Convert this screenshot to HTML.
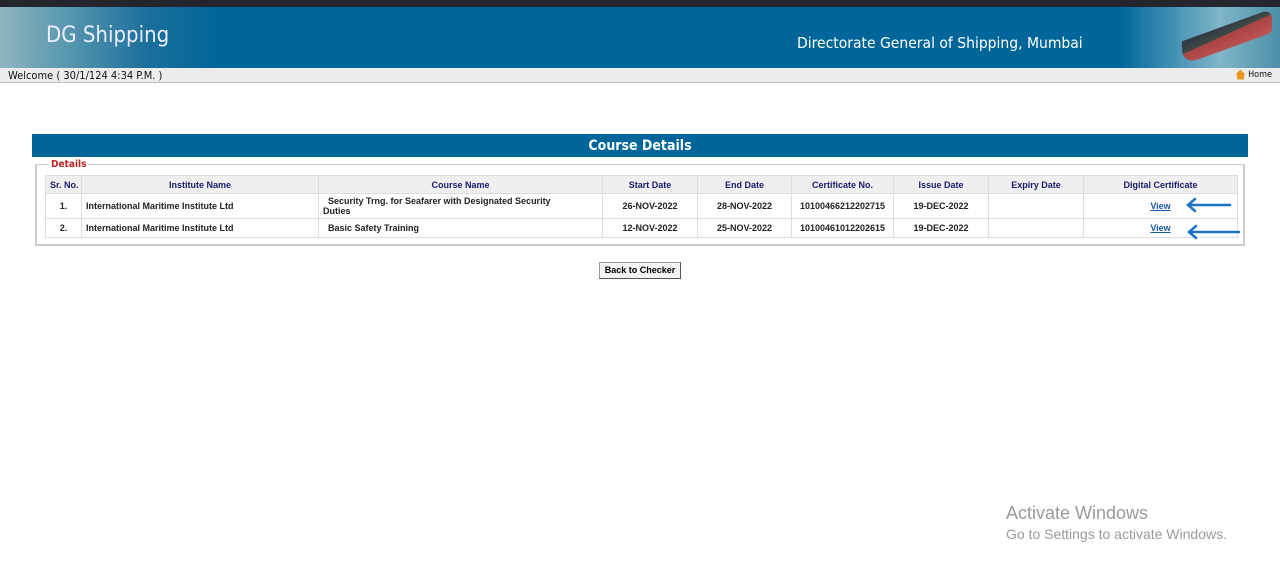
<!DOCTYPE html>
<html><head><meta charset="utf-8"><style>
*{margin:0;padding:0;box-sizing:border-box}
body{width:1280px;height:569px;background:#fff;font-family:"DejaVu Sans Condensed","DejaVu Sans",sans-serif;position:relative;overflow:hidden}
.top{position:absolute;left:0;top:0;width:1280px;height:7px;background:#25252d}
.ban{position:absolute;left:0;top:7px;width:1280px;height:61px;background:linear-gradient(90deg,#8fb5c0 0,#5d9ab0 60px,#1a6e9c 150px,#006699 220px,#006699 1120px,#3f8eb2 1170px,#7fb6c8 1220px,#4d8fa8 1280px)}
.ban .t1{position:absolute;left:46px;top:16px;color:#eef;font-size:22px;font-family:"DejaVu Sans Condensed","DejaVu Sans",sans-serif}
.ban .t2{position:absolute;left:797px;top:27px;color:#fff;font-size:15.5px;font-family:"DejaVu Sans Condensed","DejaVu Sans",sans-serif}
.ship{position:absolute;left:1182px;top:18px;width:90px;height:24px;background:linear-gradient(175deg,#334 0,#3a4a44 40%,#a44 42%,#b55 100%);transform:skewY(-20deg);border-radius:0 10px 4px 16px}
.wel{position:absolute;left:0;top:68px;width:1280px;height:15px;background:#ececec;border-bottom:1px solid #bbb;font-size:11px;padding-left:8px;line-height:15px;color:#111}
.home{position:absolute;right:8px;top:0;font-size:9px}
.home b{display:inline-block;width:10px;height:10px;background:#e8931a;clip-path:polygon(50% 0,100% 50%,85% 50%,85% 100%,15% 100%,15% 50%,0 50%);vertical-align:middle}
.cd{position:absolute;left:32px;top:134px;width:1216px;height:23px;background:#006699;color:#fff;font-weight:bold;font-size:14px;text-align:center;line-height:24px}
fieldset{position:absolute;left:35px;top:159px;width:1210px;height:87px;border:2px solid #ccc;border-top-width:1px;padding:0 8px}
legend{color:#b22;font-size:10px;font-weight:bold;padding:0 2px;margin-left:4px}
table{position:absolute;left:8px;top:5px;width:1192px;table-layout:fixed;border-collapse:collapse;font-size:9px;font-weight:bold;color:#222;font-family:"Liberation Sans",sans-serif}
td,th{border:1px solid #ddd;padding:0 4px;white-space:nowrap;overflow:hidden}
th{height:18px;background:#efefef;color:#1a1a6e}
td{height:25px}
td.w{line-height:10px}
tr.r2 td{height:19px}
.c{text-align:center}
a{color:#1a5aa8}
.btn{position:absolute;left:599px;top:262px;width:82px;height:17px;border:1px solid #999;border-right-color:#555;border-bottom-color:#555;background:#f4f4f4;font-size:9px;font-weight:bold;text-align:center;line-height:15px;white-space:nowrap;font-family:"Liberation Sans",sans-serif}
.aw{position:absolute;left:1006px;top:503px;color:#9a9a9a;font-family:"Liberation Sans",sans-serif}
</style></head><body>
<div class="top"></div>
<div class="ban"><div class="t1">DG Shipping</div><div class="t2">Directorate General of Shipping, Mumbai</div><div class="ship"></div></div>
<div class="wel">Welcome ( 30/1/124 4:34 P.M. )<span class="home"><b></b> Home</span></div>
<div class="cd">Course Details</div>
<fieldset><legend>Details</legend>
<table>
<colgroup><col style="width:36px"><col style="width:237px"><col style="width:284px"><col style="width:95px"><col style="width:94px"><col style="width:102px"><col style="width:95px"><col style="width:95px"><col style="width:154px"></colgroup>
<tr><th>Sr. No.</th><th>Institute Name</th><th>Course Name</th><th>Start Date</th><th>End Date</th><th>Certificate No.</th><th>Issue Date</th><th>Expiry Date</th><th>Digital Certificate</th></tr>
<tr><td class="c">1.</td><td>International Maritime Institute Ltd</td><td class="w">&nbsp; Security Trng. for Seafarer with Designated Security<br>Duties</td><td class="c">26-NOV-2022</td><td class="c">28-NOV-2022</td><td class="c">10100466212202715</td><td class="c">19-DEC-2022</td><td></td><td class="c"><a href="#">View</a></td></tr>
<tr class="r2"><td class="c">2.</td><td>International Maritime Institute Ltd</td><td>&nbsp; Basic Safety Training</td><td class="c">12-NOV-2022</td><td class="c">25-NOV-2022</td><td class="c">10100461012202615</td><td class="c">19-DEC-2022</td><td></td><td class="c"><a href="#">View</a></td></tr>
</table></fieldset>
<svg style="position:absolute;left:1185px;top:196px" width="60" height="45"><g stroke="#1a73c8" stroke-width="2.5" fill="none" stroke-linecap="round"><path d="M3 9H45M10 3L3 9L10 15"/><path d="M4 36H54M11 30L4 36L11 42"/></g></svg>
<div class="btn">Back to Checker</div>
<div class="aw"><div style="font-size:18px">Activate Windows</div><div style="font-size:14px;margin-top:2px">Go to Settings to activate Windows.</div></div>
</body></html>
